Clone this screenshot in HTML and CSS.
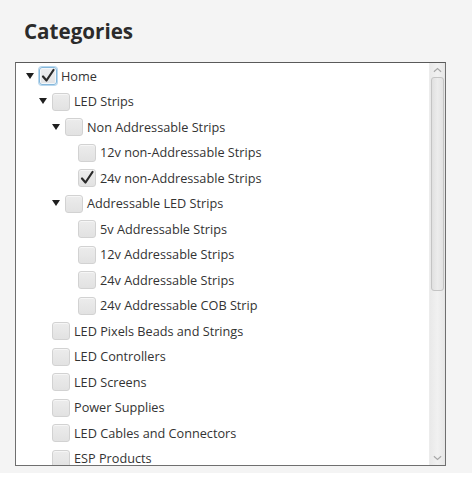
FILE: index.html
```html
<!DOCTYPE html>
<html>
<head>
<meta charset="utf-8">
<link rel="stylesheet" href="styles.css">
</head>
<body>
<div class="panel">
  <h1 class="title">Categories</h1>
  <div class="tree">
    <div class="rows">
      <div class="row l0"><span class="arrow"><i></i></span><span class="cb focused"><svg viewBox="0 0 18 18"><path d="M4 9.5 L7.5 13.5 L14.5 3" /></svg></span><span class="label">Home</span></div>
      <div class="row l1"><span class="arrow"><i></i></span><span class="cb"></span><span class="label">LED Strips</span></div>
      <div class="row l2"><span class="arrow"><i></i></span><span class="cb"></span><span class="label">Non Addressable Strips</span></div>
      <div class="row l3"><span class="arrow"></span><span class="cb"></span><span class="label">12v non-Addressable Strips</span></div>
      <div class="row l3"><span class="arrow"></span><span class="cb"><svg viewBox="0 0 18 18"><path d="M4 9.5 L7.5 13.5 L14.5 3" /></svg></span><span class="label">24v non-Addressable Strips</span></div>
      <div class="row l2"><span class="arrow"><i></i></span><span class="cb"></span><span class="label">Addressable LED Strips</span></div>
      <div class="row l3"><span class="arrow"></span><span class="cb"></span><span class="label">5v Addressable Strips</span></div>
      <div class="row l3"><span class="arrow"></span><span class="cb"></span><span class="label">12v Addressable Strips</span></div>
      <div class="row l3"><span class="arrow"></span><span class="cb"></span><span class="label">24v Addressable Strips</span></div>
      <div class="row l3"><span class="arrow"></span><span class="cb"></span><span class="label">24v Addressable COB Strip</span></div>
      <div class="row l1"><span class="arrow"></span><span class="cb"></span><span class="label">LED Pixels Beads and Strings</span></div>
      <div class="row l1"><span class="arrow"></span><span class="cb"></span><span class="label">LED Controllers</span></div>
      <div class="row l1"><span class="arrow"></span><span class="cb"></span><span class="label">LED Screens</span></div>
      <div class="row l1"><span class="arrow"></span><span class="cb"></span><span class="label">Power Supplies</span></div>
      <div class="row l1"><span class="arrow"></span><span class="cb"></span><span class="label">LED Cables and Connectors</span></div>
      <div class="row l1"><span class="arrow"></span><span class="cb"></span><span class="label">ESP Products</span></div>
    </div>
    <div class="scrollbar">
      <span class="sb-btn"><svg viewBox="0 0 10 6"><path d="M1 5 L5 1.5 L9 5" /></svg></span>
      <div class="track"><div class="thumb"></div></div>
      <span class="sb-btn"><svg viewBox="0 0 10 6"><path d="M1 1 L5 4.5 L9 1" /></svg></span>
    </div>
  </div>
</div>
</body>
</html>
```

FILE: styles.css
```css
html, body {
  margin: 0;
  padding: 0;
  background: #ffffff;
}
body {
  width: 474px;
  height: 478px;
  overflow: hidden;
  font-family: "Open Sans", "Noto Sans", sans-serif;
  color: #2e2e2e;
}
.panel {
  width: 472px;
  height: 473px;
  background: #f4f4f4;
  box-sizing: border-box;
  padding: 0 0 0 15px;
  display: flex;
  flex-direction: column;
}
.title {
  margin: 16px 0 0 9px;
  height: 30px;
  line-height: 30px;
  font-size: 20.6px;
  font-weight: 700;
  color: #2b2b2b;
}
.tree {
  margin-top: 16px;
  width: 431px;
  height: 404px;
  box-sizing: border-box;
  border: 1px solid #6f6f6f;
  border-top-color: #5a5a5a;
  background: #ffffff;
  display: flex;
  overflow: hidden;
}
.rows {
  flex: 1;
  overflow: hidden;
}
.row {
  height: 25.5px;
  display: flex;
  align-items: center;
  font-size: 12.7px;
  white-space: nowrap;
}
.l1 { padding-left: 13px; }
.l2 { padding-left: 26px; }
.l3 { padding-left: 39px; }
.arrow {
  width: 23px;
  height: 18px;
  display: flex;
  align-items: center;
  justify-content: flex-end;
  padding-right: 5px;
  box-sizing: border-box;
  flex: none;
}
.arrow i {
  width: 0;
  height: 0;
  border-left: 4px solid transparent;
  border-right: 4px solid transparent;
  border-top: 6px solid #1f1f1f;
}
.cb {
  width: 18px;
  height: 18px;
  box-sizing: border-box;
  border-radius: 3px;
  border: 1px solid #d2d2d2;
  background: linear-gradient(#ececec, #e2e2e2);
  box-shadow: inset 0 1px 0 #f6f6f6;
  flex: none;
  margin-top: 1px;
  position: relative;
}
.cb.focused {
  border: 1px solid #86b8dc;
  box-shadow: 0 0 0 1px #b9d8ee, inset 0 0 0 1px #f3f7fa;
  background: linear-gradient(#ecedef, #e3e4e6);
}
.cb svg {
  position: absolute;
  left: -1px;
  top: -1px;
  width: 18px;
  height: 18px;
  fill: none;
  stroke: #2a2a2a;
  stroke-width: 2.2;
  stroke-linecap: round;
  stroke-linejoin: round;
}
.label {
  margin-left: 4px;
  color: #333333;
}
.scrollbar {
  width: 15px;
  flex: none;
  background: linear-gradient(90deg, #e9e9e9, #f1f1f1 50%, #e6e6e6);
  display: flex;
  flex-direction: column;
  border-left: 1px solid #ececec;
}
.sb-btn {
  height: 14px;
  display: flex;
  align-items: center;
  justify-content: center;
  flex: none;
}
.sb-btn svg {
  width: 9px;
  height: 6px;
  fill: none;
  stroke: #a8a8a8;
  stroke-width: 1.3;
}
.track {
  flex: 1;
  padding: 0 1px;
}
.thumb {
  height: 214px;
  box-sizing: border-box;
  border: 1px solid #c4c4c4;
  border-radius: 3px;
  background: linear-gradient(90deg, #e0e0e0, #ececec 50%, #e2e2e2);
}
```
